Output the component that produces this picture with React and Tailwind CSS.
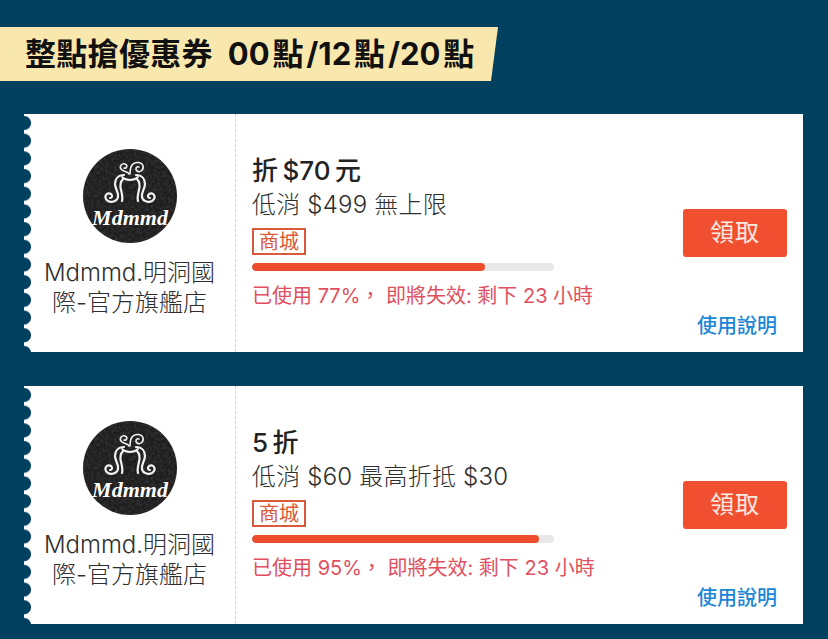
const font = { fontFamily: 'Inter, "Noto Sans CJK TC", sans-serif' }

const coupons = [
  { title: '折 $70 元', min: '低消 $499 無上限', used: 77 },
  { title: '5 折', min: '低消 $60 最高折抵 $30', used: 95 },
]

function Logo({ id }) {
  return (
    <svg width="94" height="94" viewBox="0 0 94 94">
      <defs>
        <filter id={id}>
          <feTurbulence type="fractalNoise" baseFrequency="0.35" numOctaves="3" seed="4" />
          <feColorMatrix values="0 0 0 0 1  0 0 0 0 1  0 0 0 0 1  0.5 0 0 0 -0.17" />
          <feComposite in2="SourceGraphic" operator="in" />
        </filter>
      </defs>
      <circle cx="47" cy="47" r="47" fill="#1d1d1e" />
      <circle cx="47" cy="47" r="47" fill="#fff" filter={`url(#${id})`} opacity="0.4" />
      <g fill="none" stroke="#f2f2f2" strokeLinecap="round">
        {/* top swirls */}
        <path d="M46 25c-1-3-6-2-8-5-2-3 1-6 4-5 3 1 2 5-1 4" strokeWidth="1.6" />
        <path d="M47 25c0-3 0-6 2-9 3-4 10-3 11 1 1 4-3 7-6 5-2-2-1-5 2-4" strokeWidth="1.6" />
        {/* outer legs ending in the bottom swirls */}
        <path d="M41 26c-6 0-9 4-9 9 0 5 4 8 3 13-1 5-9 7-12 2-2-4 2-7 5-5 2 2 1 4-1 4" strokeWidth="2.2" />
        <path d="M53 26c6 0 9 4 9 9 0 5-4 8-3 13 1 5 9 7 12 2 2-4-2-7-5-5-2 2-1 4 1 4" strokeWidth="2.2" />
        {/* inner legs */}
        <path d="M40 30c-3 3-3 7-2 11 1 4 2 7 1 11" strokeWidth="2.2" />
        <path d="M54 30c3 3 3 7 2 11-1 4-2 7-1 11" strokeWidth="2.2" />
        <path d="M39 28c4 4 12 4 16 0" strokeWidth="1.8" />
      </g>
      <text
        x="47"
        y="76"
        textAnchor="middle"
        fill="#fff"
        fontSize="22"
        fontWeight="700"
        fontStyle="italic"
        fontFamily='"Liberation Serif", serif'
      >
        Mdmmd
      </text>
    </svg>
  )
}

function Coupon({ coupon, id }) {
  return (
    <div className="flex h-[238px] bg-white">
      {/* scalloped ticket edge */}
      <div className="w-[7px] shrink-0 bg-[radial-gradient(circle_at_0_9px,#01415f_6.5px,#ffffff_7.5px)] bg-[length:7px_17.7px]" />
      <div className="flex w-[205px] shrink-0 flex-col items-center border-r border-dashed border-[#d4d4d4] pr-[7px] pt-[35px]">
        <Logo id={id} />
        <div className="mt-[15px] w-[180px] text-center text-[24px] leading-[30px] font-light text-[#2e2e2e]">
          Mdmmd.明洞國際-官方旗艦店
        </div>
      </div>
      <div className="flex-1 pl-[16px] pt-[39px]">
        <div className="text-[26px] leading-[35px] font-medium text-[#222] [word-spacing:-2.5px]">{coupon.title}</div>
        <div className="text-[24px] leading-[34px] font-light tracking-[0.2px] text-[#2e2e2e]">{coupon.min}</div>
        <div className="mt-[6px] flex h-[27px] w-[54px] items-center justify-center border-2 border-[#d9593a] text-[20px] leading-none text-[#d9593a]">
          商城
        </div>
        <div className="mt-[8px] h-[8px] w-[302px] overflow-hidden rounded-full bg-[#e8e8e8]">
          <div className="h-full rounded-full bg-[#ee4d2d]" style={{ width: `${coupon.used}%` }} />
        </div>
        <div className="mt-[12px] whitespace-nowrap text-[20px] leading-[26px] text-[#e0505f]">
          已使用 {coupon.used}%， 即將失效: 剩下 23 小時
        </div>
      </div>
      <div className="flex w-[136px] shrink-0 flex-col items-end pb-[13px] pr-[16px] pt-[95px]">
        <button className="h-[48px] w-[104px] rounded-[3px] bg-[#f05030] text-[24px] tracking-[1px] text-[#fbe9e4]">
          領取
        </button>
        <div className="mt-auto pr-[10px] text-[20px] leading-[26px] font-medium text-[#1a86d6]">使用說明</div>
      </div>
    </div>
  )
}

export default function App() {
  return (
    <div className="h-[639px] w-[828px] overflow-hidden bg-[#01415f] pt-[27px]" style={font}>
      <div className="flex h-[54px] w-[498px] items-center bg-[#f9e8ae] pl-[25px] text-[31px] font-bold text-[#111] [clip-path:polygon(0_0,100%_0,98.6%_100%,0_100%)]">
        <span className="tracking-[0.3px]">整點搶優惠券</span>
        <span className="ml-[15px] whitespace-nowrap [word-spacing:-4.5px]">00 點 /12 點 /20 點</span>
      </div>
      <div className="ml-[24px] mt-[33px] flex w-[779px] flex-col gap-[34px]">
        {coupons.map((c, i) => (
          <Coupon key={c.title} coupon={c} id={`grain${i}`} />
        ))}
      </div>
    </div>
  )
}
